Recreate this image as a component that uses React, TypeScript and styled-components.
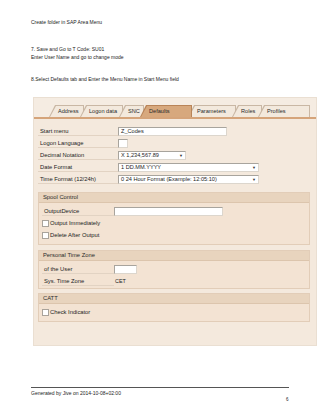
import React from 'react';
import styled, { createGlobalStyle } from 'styled-components';

const GlobalStyle = createGlobalStyle`
  html, body {
    margin: 0;
    padding: 0;
    background: #ffffff;
  }
  body {
    font-family: "Liberation Sans", Arial, sans-serif;
    color: #1a1a1a;
  }
`;

const Page = styled.div`
  width: 320px;
  height: 414px;
  position: relative;
  overflow: hidden;
`;

const DocText = styled.div<{ top: number }>`
  padding-left: 31px;
  margin-top: ${(p) => p.top}px;
  font-size: 5px;
  line-height: 8px;
  height: 8px;
  color: #222;
  white-space: nowrap;
`;

const Shot = styled.div`
  margin: 14px 0 0 33px;
  width: 284px;
  height: 249px;
  background: #f5ece2;
  border: 1px solid #eadfd2;
  box-sizing: border-box;
  display: flex;
  flex-direction: column;
`;

const TabStrip = styled.div`
  height: 19px;
  display: flex;
  align-items: flex-end;
  padding-left: 15px;
`;

const TabOuter = styled.div<{ w: number; active?: boolean }>`
  width: ${(p) => p.w}px;
  height: 12px;
  margin-right: -4px;
  background: ${(p) => (p.active ? '#b98458' : '#c9b7a4')};
  clip-path: polygon(6px 0, 100% 0, 100% 100%, 0 100%);
  display: flex;
  position: relative;
  z-index: ${(p) => (p.active ? 2 : 1)};
`;

const TabInner = styled.div<{ active?: boolean }>`
  flex: 1;
  margin: 1px 1px 0 1px;
  background: ${(p) => (p.active ? '#d7a87d' : '#f3e9dd')};
  clip-path: polygon(6px 0, 100% 0, 100% 100%, 0 100%);
  font-size: 5.6px;
  line-height: 11px;
  padding-left: 8px;
  color: #2a2a2a;
  white-space: nowrap;
`;

const Content = styled.div`
  flex: 1;
  border-top: 2px solid #d5a47a;
  background: #f4e9dd;
  padding: 6px 4px 0 4px;
  display: flex;
  flex-direction: column;
`;

const FormRow = styled.div`
  height: 12px;
  display: flex;
  align-items: center;
`;

const Label = styled.div<{ w: number }>`
  width: ${(p) => p.w}px;
  height: 10px;
  line-height: 10px;
  padding-left: 2px;
  box-sizing: border-box;
  font-size: 5.8px;
  color: #222;
  border-bottom: 1px solid #e2d3c3;
  white-space: nowrap;
  flex-shrink: 0;
`;

const Field = styled.div<{ w: number }>`
  width: ${(p) => p.w}px;
  height: 9px;
  box-sizing: border-box;
  background: #ffffff;
  border: 1px solid #a8a49d;
  border-right-color: #dcd6cd;
  border-bottom-color: #dcd6cd;
  font-size: 5.6px;
  line-height: 7px;
  padding: 0 2px;
  display: flex;
  justify-content: space-between;
  white-space: nowrap;
  overflow: hidden;
  color: #1e1e1e;
`;

const Arrow = styled.span`
  font-size: 4px;
  color: #333;
`;

const Group = styled.div<{ top: number; h: number }>`
  margin-top: ${(p) => p.top}px;
  height: ${(p) => p.h}px;
  margin-right: 2px;
  background: #f3e3d3;
  border: 1px solid #e2cdb8;
  box-sizing: border-box;
  display: flex;
  flex-direction: column;
`;

const GroupHead = styled.div`
  height: 9px;
  line-height: 9px;
  background: #e8d4be;
  border-bottom: 1px solid #dcc5ad;
  font-size: 5.8px;
  padding-left: 4px;
  color: #2a2a2a;
  margin-bottom: 2px;
`;

const GroupRow = styled.div`
  height: 12px;
  display: flex;
  align-items: center;
  padding-left: 3px;
`;

const CheckBox = styled.div`
  width: 5px;
  height: 5px;
  background: #ffffff;
  border: 1px solid #a9a39b;
  margin-right: 1px;
`;

const CheckText = styled.span`
  font-size: 5.8px;
  color: #222;
`;

const PlainValue = styled.span`
  font-size: 5.4px;
  margin-left: 1px;
  color: #222;
`;

const Spacer = styled.div`
  height: 41px;
`;

const FooterRule = styled.div`
  margin: 0 0 0 31px;
  width: 258px;
  height: 1px;
  background: #555;
`;

const PageNum = styled.div`
  padding-left: 286px;
  font-size: 4.5px;
  line-height: 6px;
  color: #222;
`;

const tabs = [
  { label: 'Address', w: 35 },
  { label: 'Logon data', w: 43 },
  { label: 'SNC', w: 25 },
  { label: 'Defaults', w: 52, active: true },
  { label: 'Parameters', w: 48 },
  { label: 'Roles', w: 30 },
  { label: 'Profiles', w: 52 },
];

const App: React.FC = () => {
  return (
    <Page>
      <GlobalStyle />
      <DocText top={18}>Create folder in SAP Area Menu</DocText>
      <DocText top={19}>7. Save and Go to T Code: SU01</DocText>
      <DocText top={0}>Enter User Name and go to change mode</DocText>
      <DocText top={14}>8.Select Defaults tab and Enter the Menu Name in Start Menu field</DocText>

      <Shot>
        <TabStrip>
          {tabs.map((t) => (
            <TabOuter key={t.label} w={t.w} active={t.active}>
              <TabInner active={t.active}>{t.label}</TabInner>
            </TabOuter>
          ))}
        </TabStrip>
        <Content>
          <FormRow>
            <Label w={80}>Start menu</Label>
            <Field w={109}>Z_Codes</Field>
          </FormRow>
          <FormRow>
            <Label w={80}>Logon Language</Label>
            <Field w={10} />
          </FormRow>
          <FormRow>
            <Label w={80}>Decimal Notation</Label>
            <Field w={68}>
              X 1,234,567.89<Arrow>▼</Arrow>
            </Field>
          </FormRow>
          <FormRow>
            <Label w={80}>Date Format</Label>
            <Field w={141}>
              1 DD.MM.YYYY<Arrow>▼</Arrow>
            </Field>
          </FormRow>
          <FormRow>
            <Label w={80}>Time Format (12/24h)</Label>
            <Field w={141}>
              0 24 Hour Format (Example: 12:05:10)<Arrow>▼</Arrow>
            </Field>
          </FormRow>

          <Group top={7} h={53}>
            <GroupHead>Spool Control</GroupHead>
            <GroupRow>
              <Label w={72}>OutputDevice</Label>
              <Field w={109} />
            </GroupRow>
            <GroupRow>
              <CheckBox />
              <CheckText>Output Immediately</CheckText>
            </GroupRow>
            <GroupRow>
              <CheckBox />
              <CheckText>Delete After Output</CheckText>
            </GroupRow>
          </Group>

          <Group top={5} h={39}>
            <GroupHead>Personal Time Zone</GroupHead>
            <GroupRow>
              <Label w={72}>of the User</Label>
              <Field w={23} />
            </GroupRow>
            <GroupRow>
              <Label w={72}>Sys. Time Zone</Label>
              <PlainValue>CET</PlainValue>
            </GroupRow>
          </Group>

          <Group top={4} h={29}>
            <GroupHead>CATT</GroupHead>
            <GroupRow>
              <CheckBox />
              <CheckText>Check Indicator</CheckText>
            </GroupRow>
          </Group>
        </Content>
      </Shot>

      <Spacer />
      <FooterRule />
      <DocText top={1}>Generated by Jive on 2014-10-08+02:00</DocText>
      <PageNum>6</PageNum>
    </Page>
  );
};

export default App;
